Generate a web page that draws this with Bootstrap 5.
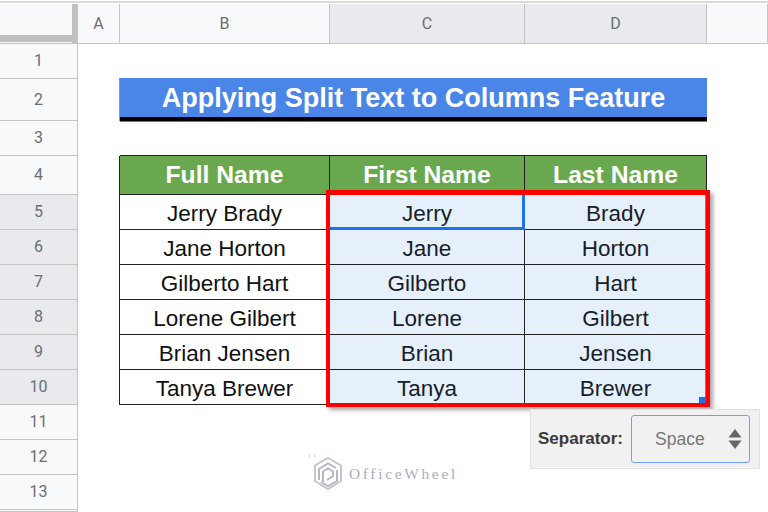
<!DOCTYPE html>
<html lang="en">
<head>
<meta charset="utf-8">
<title>Applying Split Text to Columns Feature</title>
<link href="https://cdn.jsdelivr.net/npm/bootstrap@5.3.0/dist/css/bootstrap.min.css" rel="stylesheet">
<style>
html,body{width:768px;height:512px;overflow:hidden;background:#fff}
.sheet{display:grid;position:relative;width:768px;height:512px;overflow:hidden;
  grid-template-columns:78px 42px 210px 195px 182px 1fr;
  grid-template-rows:4px 40px 35px 42px 35px 39px repeat(9,35px) 2px;
  font-family:"Liberation Sans",Arial,sans-serif;color:#111}
.strip{grid-column:1/-1;background:linear-gradient(#fff 1px,#dadada 1px,#dadada 3px,#fff 3px)}
.hd{display:flex;align-items:center;justify-content:center;background:#f8f9fa;border-right:1px solid #c4c4c4;border-bottom:1px solid #c4c4c4;font-family:Roboto,sans-serif;font-size:16px;color:#6b6e72}
.hd-on{background:#e8eaed}
.corner{position:relative}
.corner-v{position:absolute;left:72px;top:0;width:5px;height:39px;background:#c0c0c0}
.corner-h{position:absolute;left:0;top:31px;width:72px;height:7px;background:#c0c0c0}
.blank{background:#fff}
.tc{display:flex;align-items:center;justify-content:center;font-size:22.5px;border-right:1px solid #222;border-bottom:1px solid #222;padding-top:3px;background:#fff}
.tc-sel{background:#e6f0fb;color:#16202c}
.tc-head{background:#6aa84f;color:#fff;font-weight:700;font-size:24.7px;padding-top:0}
.edge-r{border-right:1px solid #222}
.edge-b{border-bottom:1px solid #222}
.title-bar{grid-column:3/6;display:flex;align-items:center;justify-content:center;margin-top:-1px;background:#4a86e8;color:#fff;font-weight:700;font-size:27px;border-bottom:4px solid #000;box-shadow:0 1px 0 #777,-1px 0 0 #999;padding-top:1px;z-index:1}
.picked{position:absolute;left:326px;top:190px;width:384px;height:217px;border:4px solid #f00;border-top-width:5px;box-shadow:3px 3px 4px rgba(0,0,0,.35)}
.picked-edge{position:absolute;right:0;top:0;bottom:0;width:1px;background:#4a86e8}
.grip{position:absolute;right:0;bottom:0;width:7px;height:6px;background:#1a73e8}
.active-cell{position:absolute;left:0;top:0;width:195px;height:35px;border-right:3px solid #1a73e8;border-bottom:3px solid #1a73e8}
.sep-box{position:absolute;left:530px;top:409px;width:230px;height:60px;background:#f1f1f1;border:1px solid #e2e2e2;display:flex;align-items:center;padding-left:7px;gap:8px}
.sep-label{font-weight:700;font-size:17px;color:#3a3a3a;white-space:nowrap}
.sep-pick{width:119px;height:48px;border:1px solid #6ea1f5;border-radius:3px;display:flex;align-items:center;justify-content:space-between;padding:0 7px 0 23px;color:#777;font-size:17.5px}
.logo-wrap{position:absolute;left:313px;top:456px;display:flex;align-items:center;gap:6px}
.logo-word{font-family:"Liberation Serif",serif;font-size:15.4px;letter-spacing:2.7px;color:#a9aeb9;line-height:1}
.specks{position:absolute;left:309px;top:454px;width:6px;height:4px;border-left:1px solid #ddd;border-right:1px solid #ddd}
</style>
</head>
<body>
<div class="sheet">
  <div class="strip"></div>

  <div class="hd corner"><div class="corner-v"></div><div class="corner-h"></div></div>
  <div class="hd">A</div><div class="hd">B</div><div class="hd hd-on">C</div><div class="hd hd-on">D</div><div class="hd"></div>

  <div class="hd">1</div><div class="blank"></div><div class="blank"></div><div class="blank"></div><div class="blank"></div><div class="blank"></div>

  <div class="hd">2</div><div class="blank"></div>
  <div class="title-bar">Applying Split Text to Columns Feature</div><div class="blank"></div>

  <div class="hd">3</div><div class="blank"></div><div class="edge-b"></div><div class="edge-b"></div><div class="edge-b"></div><div class="blank"></div>

  <div class="hd">4</div><div class="edge-r"></div>
  <div class="tc tc-head">Full Name</div><div class="tc tc-head">First Name</div><div class="tc tc-head">Last Name</div><div class="blank"></div>

  <div class="hd hd-on">5</div><div class="edge-r"></div>
  <div class="tc">Jerry Brady</div><div class="tc tc-sel">Jerry</div><div class="tc tc-sel">Brady</div><div class="blank"></div>

  <div class="hd hd-on">6</div><div class="edge-r"></div>
  <div class="tc">Jane Horton</div><div class="tc tc-sel">Jane</div><div class="tc tc-sel">Horton</div><div class="blank"></div>

  <div class="hd hd-on">7</div><div class="edge-r"></div>
  <div class="tc">Gilberto Hart</div><div class="tc tc-sel">Gilberto</div><div class="tc tc-sel">Hart</div><div class="blank"></div>

  <div class="hd hd-on">8</div><div class="edge-r"></div>
  <div class="tc">Lorene Gilbert</div><div class="tc tc-sel">Lorene</div><div class="tc tc-sel">Gilbert</div><div class="blank"></div>

  <div class="hd hd-on">9</div><div class="edge-r"></div>
  <div class="tc">Brian Jensen</div><div class="tc tc-sel">Brian</div><div class="tc tc-sel">Jensen</div><div class="blank"></div>

  <div class="hd hd-on">10</div><div class="edge-r"></div>
  <div class="tc">Tanya Brewer</div><div class="tc tc-sel">Tanya</div><div class="tc tc-sel">Brewer</div><div class="blank"></div>

  <div class="hd">11</div><div class="blank"></div><div class="blank"></div><div class="blank"></div><div class="blank"></div><div class="blank"></div>
  <div class="hd">12</div><div class="blank"></div><div class="blank"></div><div class="blank"></div><div class="blank"></div><div class="blank"></div>
  <div class="hd">13</div><div class="blank"></div><div class="blank"></div><div class="blank"></div><div class="blank"></div><div class="blank"></div>
  <div class="hd"></div><div class="blank"></div><div class="blank"></div><div class="blank"></div><div class="blank"></div><div class="blank"></div>

  <div class="picked">
    <div class="active-cell"></div>
    <div class="picked-edge"></div>
    <div class="grip"></div>
  </div>

  <div class="sep-box">
    <span class="sep-label">Separator:</span>
    <div class="sep-pick">
      <span>Space</span>
      <svg width="14" height="22" viewBox="0 0 14 22" aria-hidden="true"><path d="M7 1 13.5 9.5H.5Z" fill="#666"/><path d="M7 21 13.5 12.5H.5Z" fill="#666"/></svg>
    </div>
  </div>

  <div class="specks"></div>
  <div class="logo-wrap">
    <svg width="30" height="35" viewBox="0 0 30 35" fill="none" stroke="#b4b8c2" stroke-width="2" aria-hidden="true">
      <path d="M15 2 28 9.5V25L15 33 2 25V9.5Z" opacity=".8"/>
      <path d="M6 24V13L15 7.5 23 12"/>
      <path d="M10 26V15.5L15 12.5 20 15.5V20L14 24"/>
      <path d="M24 14V25L15 30 8 26"/>
    </svg>
    <span class="logo-word">OfficeWheel</span>
  </div>
</div>
<script src="https://cdn.jsdelivr.net/npm/bootstrap@5.3.0/dist/js/bootstrap.bundle.min.js"></script>
</body>
</html>
